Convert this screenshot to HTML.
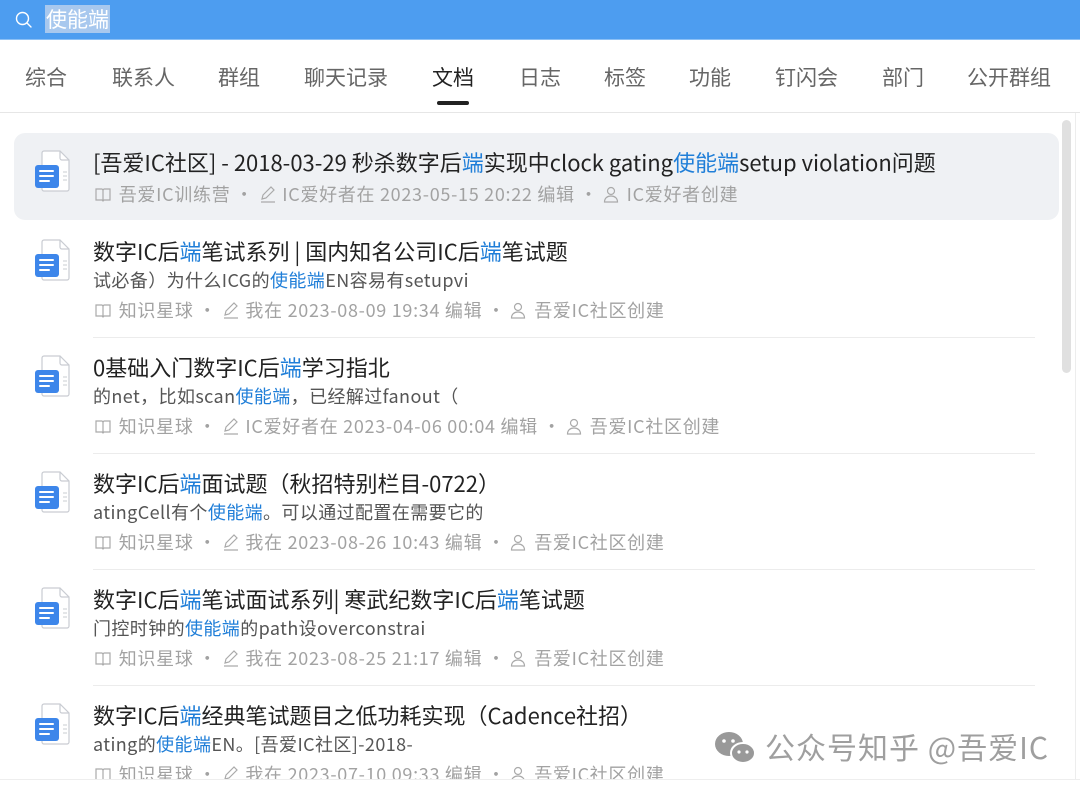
<!DOCTYPE html>
<html><head><meta charset="utf-8"><style>
*{margin:0;padding:0;box-sizing:border-box}
body{width:1080px;height:792px;overflow:hidden;background:#fff;font-family:"Noto Sans CJK SC","Liberation Sans",sans-serif;position:relative}
.top{position:absolute;left:0;top:0;width:1080px;height:40px;background:#4d9df0;border-bottom:1px solid #8cc0f5}
.q{position:absolute;left:45px;top:5px;font-size:21px;color:#fff;background:#a8c8ee;line-height:28px;padding:0 1px}
.tabs{position:absolute;top:62px;left:0;width:1080px;height:30px;font-size:21px;color:#666}
.tabs span{position:absolute;top:0;line-height:30px;white-space:nowrap}
.ul{position:absolute;left:437px;top:101px;width:32px;height:4px;border-radius:2px;background:#222}
.div{position:absolute;left:0;top:112px;width:1080px;height:1px;background:#e6e6e6}
.sb{position:absolute;left:1062px;top:120px;width:9px;height:253px;border-radius:5px;background:#e0e0e0}
.vl{position:absolute;left:1075px;top:113px;width:1px;height:679px;background:#ededed}
.hl{position:absolute;left:14px;top:133px;width:1045px;height:87px;border-radius:11px;background:#eff1f4}
.t{position:absolute;left:93px;font-size:22px;color:#222;white-space:nowrap;line-height:28px}
.s{position:absolute;left:93px;font-size:18px;color:#555;white-space:nowrap;line-height:24px;letter-spacing:.4px}
.m{position:absolute;left:95px;font-size:18px;color:#a2a2a2;white-space:nowrap;line-height:24px;letter-spacing:.7px}
.m svg{margin-right:2px}
.b{color:#1f7ed8}
.sep{position:absolute;left:93px;width:942px;height:1px;background:#ececec}
.ic{position:absolute;left:35px}
.wm{position:absolute;top:726px;font-size:30px;color:#888;opacity:.8;white-space:nowrap;line-height:40px;letter-spacing:1px}
</style></head><body>
<div class="top">
<svg style="position:absolute;left:14px;top:10px" width="20" height="20" viewBox="0 0 20 20"><circle cx="8.5" cy="8.5" r="6" fill="none" stroke="#fff" stroke-width="1.4"/><path d="M13 13l4 4" stroke="#fff" stroke-width="1.4" stroke-linecap="round"/></svg>
<div class="q">使能端</div>
</div>
<div class="tabs">
<span style="left:25px">综合</span><span style="left:112px">联系人</span><span style="left:218px">群组</span><span style="left:304px">聊天记录</span><span style="left:432px;color:#222">文档</span><span style="left:519px">日志</span><span style="left:604px">标签</span><span style="left:689px">功能</span><span style="left:775px">钉闪会</span><span style="left:882px">部门</span><span style="left:967px">公开群组</span>
</div>
<div class="ul"></div>
<div class="div"></div>
<div class="sb"></div><div class="vl"></div>
<div class="hl"></div>

<svg width="0" height="0" style="position:absolute"><defs><g id="doc"><path d="M9 1h16l9 9v29a2 2 0 0 1-2 2H9a2 2 0 0 1-2-2V3a2 2 0 0 1 2-2z" fill="#fff" stroke="#c9ccd2" stroke-width="1.2"/><path d="M25 1v7a2 2 0 0 0 2 2h7" fill="none" stroke="#c9ccd2" stroke-width="1.2"/><rect x="0" y="15" width="24" height="23" rx="3" fill="#3d86ea"/><path d="M5 21h13M5 26h13M5 31h9" stroke="#fff" stroke-width="2" stroke-linecap="round"/><path d="M28 22h4M28 26h4M28 30h4" stroke="#c9ccd2" stroke-width="1"/></g>
<g id="bk"><path d="M1 3h6l1 1 1-1h6v11H9l-1 1-1-1H1z" fill="none" stroke="#aaa" stroke-width="1.2"/><path d="M8 4v10" stroke="#aaa" stroke-width="1.2"/></g>
<g id="pn"><path d="M3 13l1-4 8-8 3 3-8 8zM2 16h14" fill="none" stroke="#aaa" stroke-width="1.2"/></g>
<g id="us"><circle cx="8" cy="5" r="3.5" fill="none" stroke="#aaa" stroke-width="1.2"/><path d="M1.5 16c0-4 3-6 6.5-6s6.5 2 6.5 6z" fill="none" stroke="#aaa" stroke-width="1.2"/></g></defs></svg>

<svg class="ic" style="top:150px" width="42" height="42"><use href="#doc"/></svg>
<div class="t" style="top:148px">[吾爱IC社区] - 2018-03-29 秒杀数字后<span class="b">端</span>实现中clock gating<span class="b">使能端</span>setup violation问题</div>
<div class="m" style="top:182px"><svg width="17" height="17" style="vertical-align:-2px"><use href="#bk"/></svg> 吾爱IC训练营 · <svg width="17" height="17" style="vertical-align:-2px"><use href="#pn"/></svg> IC爱好者在 2023-05-15 20:22 编辑 · <svg width="17" height="17" style="vertical-align:-2px"><use href="#us"/></svg> IC爱好者创建</div>

<svg class="ic" style="top:239px" width="42" height="42"><use href="#doc"/></svg>
<div class="t" style="top:237px">数字IC后<span class="b">端</span>笔试系列 | 国内知名公司IC后<span class="b">端</span>笔试题</div>
<div class="s" style="top:268px">试必备）为什么ICG的<span class="b">使能端</span>EN容易有setupvi</div>
<div class="m" style="top:298px"><svg width="17" height="17" style="vertical-align:-2px"><use href="#bk"/></svg> 知识星球 · <svg width="17" height="17" style="vertical-align:-2px"><use href="#pn"/></svg> 我在 2023-08-09 19:34 编辑 · <svg width="17" height="17" style="vertical-align:-2px"><use href="#us"/></svg> 吾爱IC社区创建</div>
<div class="sep" style="top:337px"></div>

<svg class="ic" style="top:355px" width="42" height="42"><use href="#doc"/></svg>
<div class="t" style="top:353px">0基础入门数字IC后<span class="b">端</span>学习指北</div>
<div class="s" style="top:384px">的net，比如scan<span class="b">使能端</span>，已经解过fanout（</div>
<div class="m" style="top:414px"><svg width="17" height="17" style="vertical-align:-2px"><use href="#bk"/></svg> 知识星球 · <svg width="17" height="17" style="vertical-align:-2px"><use href="#pn"/></svg> IC爱好者在 2023-04-06 00:04 编辑 · <svg width="17" height="17" style="vertical-align:-2px"><use href="#us"/></svg> 吾爱IC社区创建</div>
<div class="sep" style="top:453px"></div>

<svg class="ic" style="top:471px" width="42" height="42"><use href="#doc"/></svg>
<div class="t" style="top:469px">数字IC后<span class="b">端</span>面试题（秋招特别栏目-0722）</div>
<div class="s" style="top:500px">atingCell有个<span class="b">使能端</span>。可以通过配置在需要它的</div>
<div class="m" style="top:530px"><svg width="17" height="17" style="vertical-align:-2px"><use href="#bk"/></svg> 知识星球 · <svg width="17" height="17" style="vertical-align:-2px"><use href="#pn"/></svg> 我在 2023-08-26 10:43 编辑 · <svg width="17" height="17" style="vertical-align:-2px"><use href="#us"/></svg> 吾爱IC社区创建</div>
<div class="sep" style="top:569px"></div>

<svg class="ic" style="top:587px" width="42" height="42"><use href="#doc"/></svg>
<div class="t" style="top:585px">数字IC后<span class="b">端</span>笔试面试系列| 寒武纪数字IC后<span class="b">端</span>笔试题</div>
<div class="s" style="top:616px">门控时钟的<span class="b">使能端</span>的path设overconstrai</div>
<div class="m" style="top:646px"><svg width="17" height="17" style="vertical-align:-2px"><use href="#bk"/></svg> 知识星球 · <svg width="17" height="17" style="vertical-align:-2px"><use href="#pn"/></svg> 我在 2023-08-25 21:17 编辑 · <svg width="17" height="17" style="vertical-align:-2px"><use href="#us"/></svg> 吾爱IC社区创建</div>
<div class="sep" style="top:685px"></div>

<svg class="ic" style="top:703px" width="42" height="42"><use href="#doc"/></svg>
<div class="t" style="top:701px">数字IC后<span class="b">端</span>经典笔试题目之低功耗实现（Cadence社招）</div>
<div class="s" style="top:732px">ating的<span class="b">使能端</span>EN。[吾爱IC社区]-2018-</div>
<div class="m" style="top:762px"><svg width="17" height="17" style="vertical-align:-2px"><use href="#bk"/></svg> 知识星球 · <svg width="17" height="17" style="vertical-align:-2px"><use href="#pn"/></svg> 我在 2023-07-10 09:33 编辑 · <svg width="17" height="17" style="vertical-align:-2px"><use href="#us"/></svg> 吾爱IC社区创建</div>
<div style="position:absolute;left:0;top:779px;width:1080px;height:13px;background:#fff;border-top:1px solid #eee"></div>

<svg style="position:absolute;left:713px;top:730px" width="46" height="36" viewBox="0 0 46 36"><ellipse cx="16" cy="14" rx="14" ry="12" fill="#999"/><ellipse cx="30" cy="23" rx="12" ry="10" fill="#999" stroke="#fff" stroke-width="2"/><circle cx="11" cy="11" r="1.8" fill="#fff"/><circle cx="20" cy="11" r="1.8" fill="#fff"/><circle cx="26" cy="22" r="1.6" fill="#fff"/><circle cx="34" cy="22" r="1.6" fill="#fff"/></svg>
<div class="wm" style="left:765px">公众号知乎 @吾爱IC</div>
</body></html>
